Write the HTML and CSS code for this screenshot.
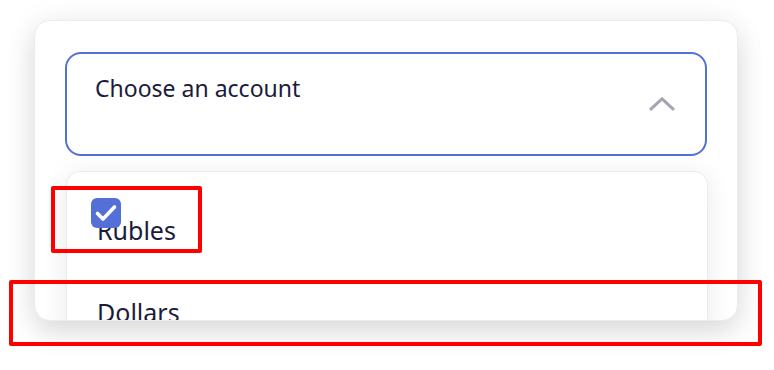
FILE: index.html
```html
<!DOCTYPE html>
<html lang="en">
<head>
<meta charset="utf-8">
<title>Choose an account</title>
<link rel="stylesheet" href="styles.css">
</head>
<body>
<div class="card">
  <div class="select">
    <span class="select-label">Choose an account</span>
    <svg class="chevron" width="28" height="14" viewBox="0 0 28 14" aria-hidden="true">
      <path d="M2 12.8 L14 1.8 L26 12.8" fill="none" stroke="#a5a5b3" stroke-width="3"/>
    </svg>
  </div>
  <ul class="options">
    <li class="option">
      <span class="checkbox">
        <svg width="30" height="30" viewBox="0 0 30 30" aria-hidden="true">
          <path d="M6.5 15.5 L12 21 L23.5 9" fill="none" stroke="#ffffff" stroke-width="3.6" stroke-linecap="round" stroke-linejoin="round"/>
        </svg>
      </span>
      <span class="option-label">Rubles</span>
    </li>
    <li class="option">
      <span class="option-label">Dollars</span>
    </li>
  </ul>
</div>
<div class="mark mark-check"></div>
<div class="mark mark-row"></div>
</body>
</html>
```

FILE: styles.css
```css
* {
  box-sizing: border-box;
}

html, body {
  margin: 0;
  padding: 0;
  background: #ffffff;
}

body {
  position: relative;
  width: 774px;
  height: 370px;
  overflow: hidden;
  font-family: "Noto Sans", "Open Sans", sans-serif;
  color: #1b1b3c;
}

.card {
  margin: 20px 0 0 34px;
  width: 704px;
  height: 301px;
  padding: 31px 30px 0 30px;
  background: #ffffff;
  border: 1px solid #ececec;
  border-radius: 16px;
  overflow: hidden;
  box-shadow: 0 12px 28px rgba(0, 0, 0, 0.12), 0 0 34px rgba(0, 0, 0, 0.05);
}

.select {
  height: 104px;
  display: flex;
  align-items: center;
  justify-content: space-between;
  padding: 0 28px;
  border: 2px solid #5470d7;
  border-radius: 16px;
}

.select-label {
  align-self: flex-start;
  margin-top: 19px;
  font-size: 23px;
  line-height: 30px;
}

.chevron {
  margin-right: 1px;
}

.options {
  list-style: none;
  margin: 15px -1px 0 1px;
  padding: 0;
  border: 1px solid #ececec;
  border-radius: 14px;
  background: #ffffff;
  box-shadow: 0 4px 26px rgba(0, 0, 0, 0.09);
}

.option {
  position: relative;
  padding: 42px 30px 8px 30px;
}

.option-label {
  display: block;
  font-size: 25px;
  line-height: 32px;
}

.checkbox {
  position: absolute;
  left: 24px;
  top: 26px;
  width: 30px;
  height: 30px;
  border-radius: 6px;
  background: #5470d7;
  z-index: 1;
}

.checkbox svg {
  display: block;
}

.mark {
  position: absolute;
  border: 4px solid #ff0000;
  border-radius: 2px;
}

.mark-check {
  left: 51px;
  top: 186px;
  width: 151px;
  height: 67px;
}

.mark-row {
  left: 9px;
  top: 280px;
  width: 753px;
  height: 66px;
}
```
